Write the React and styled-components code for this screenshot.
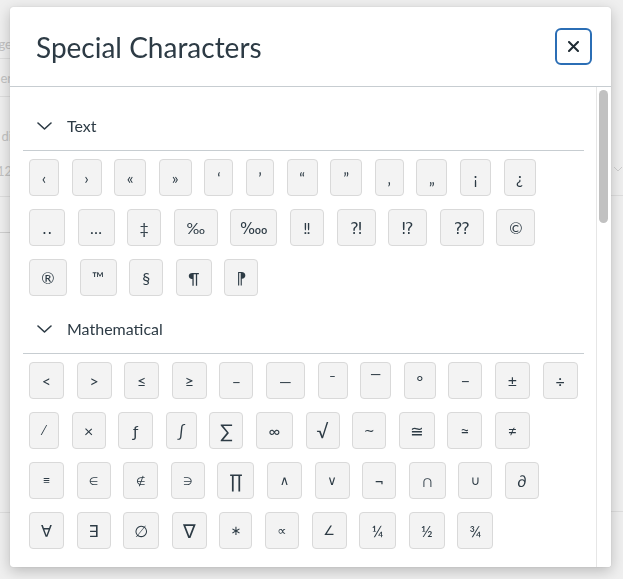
import React from "react";
import styled, { createGlobalStyle } from "styled-components";

const GlobalStyle = createGlobalStyle`
  html, body { margin: 0; padding: 0; height: 100%; overflow: hidden; }
  body {
    background: #efefef;
    font-family: Lato, "Noto Sans", "DejaVu Sans", sans-serif;
  }
  #root { height: 100%; }
`;

/* ---------- faded page behind the dialog ---------- */
const Page = styled.div`
  height: 100%;
  display: flex;
  justify-content: space-between;
`;

const SideCol = styled.div`
  width: 12px;
  display: flex;
  flex-direction: column;
  overflow: hidden;
`;

const SideCell = styled.div`
  box-sizing: border-box;
  height: ${(p) => p.$h}px;
  flex: ${(p) => (p.$fill ? "1" : "none")};
  border-bottom: 1px solid ${(p) => (p.$strong ? "#cfcfcf" : p.$line ? "#dedede" : "transparent")};
  display: flex;
  flex-direction: column;
  justify-content: ${(p) => p.$justify || "center"};
  align-items: ${(p) => (p.$start ? "flex-start" : "flex-end")};
  gap: ${(p) => p.$gap || 0}px;
  padding: ${(p) => p.$pad || "0"};
`;

const FadedText = styled.span`
  font-size: 13px;
  line-height: 16px;
  color: #c3c3c3;
  white-space: nowrap;
`;

/* ---------- dialog ---------- */
const Overlay = styled.div`
  position: fixed;
  inset: 0;
  display: flex;
  box-sizing: border-box;
  padding: 7px 12px 12px 10px;
`;

const Modal = styled.section`
  flex: 1;
  min-height: 0;
  display: flex;
  flex-direction: column;
  background: #ffffff;
  border-radius: 3px;
  box-shadow: 0 4px 14px rgba(0, 0, 0, 0.22), 0 0 1px rgba(0, 0, 0, 0.25);
  overflow: hidden;
`;

const Header = styled.header`
  flex: none;
  height: 80px;
  box-sizing: border-box;
  display: flex;
  align-items: center;
  justify-content: space-between;
  padding: 0 19px 0 26px;
  border-bottom: 1px solid #c7cdd1;
`;

const Title = styled.h2`
  margin: 0;
  font-size: 28px;
  font-weight: 400;
  line-height: 1;
  color: #2d3b45;
`;

const CloseButton = styled.button`
  width: 37px;
  height: 37px;
  box-sizing: border-box;
  padding: 0;
  border: 2px solid #2b6eb5;
  border-radius: 6px;
  background: #ffffff;
  display: grid;
  place-items: center;
  cursor: pointer;
`;

const BodyFrame = styled.div`
  flex: 1;
  min-height: 0;
  display: flex;
`;

const Content = styled.div`
  flex: 1;
  min-width: 0;
  overflow: hidden;
  padding: 14px 12px 0 13px;
`;

const ScrollTrack = styled.div`
  flex: none;
  width: 15px;
  box-sizing: border-box;
  border-left: 1px solid #e6e6e6;
  padding: 3px 3px 0 2px;
  background: #ffffff;
`;

const ScrollThumb = styled.div`
  height: 133px;
  border-radius: 5px;
  background: #c1c1c1;
`;

const Section = styled.div`
  padding-bottom: 8px;
`;

const SectionToggle = styled.button`
  width: 100%;
  height: 50px;
  box-sizing: border-box;
  display: flex;
  align-items: center;
  gap: 15px;
  padding: 0 0 0 14px;
  margin: 0;
  border: 0;
  border-bottom: 1px solid #c7cdd1;
  background: none;
  font-family: inherit;
  font-size: 16px;
  color: #2d3b45;
  cursor: pointer;
`;

const Rows = styled.div`
  display: flex;
  flex-direction: column;
  gap: 13px;
  margin-top: 8px;
  padding-left: 6px;
`;

const Row = styled.div`
  display: flex;
  gap: 12.6px;
`;

const CharButton = styled.button`
  width: ${(p) => p.$w}px;
  height: 37px;
  flex: none;
  box-sizing: border-box;
  padding: 0;
  border: 1px solid #d9d9d9;
  border-radius: 4px;
  background: #f3f3f3;
  display: flex;
  align-items: center;
  justify-content: center;
  font-family: Lato, "DejaVu Sans", "Noto Sans", sans-serif;
  font-size: ${(p) => p.$size}px;
  line-height: 1;
  color: #2d3b45;
  cursor: pointer;
`;

const Chevron = () => (
  <svg width="15" height="8" viewBox="0 0 15 8" aria-hidden="true">
    <polyline points="1,1 7.5,7 14,1" fill="none" stroke="#2d3b45" strokeWidth="1.6" strokeLinecap="round" strokeLinejoin="round" />
  </svg>
);

const SmallChevron = () => (
  <svg width="10" height="6" viewBox="0 0 10 6" aria-hidden="true">
    <polyline points="1,1 5,5 9,1" fill="none" stroke="#cfcfcf" strokeWidth="1" />
  </svg>
);

const CloseIcon = () => (
  <svg width="11" height="11" viewBox="0 0 11 11" aria-hidden="true">
    <path d="M1 1 L10 10 M10 1 L1 10" stroke="#1f2b33" strokeWidth="2" strokeLinecap="round" />
  </svg>
);

/* glyphs that the reference draws in a smaller or larger fallback face */
const TINY = "∈∋∉";
const SMALL = "∧∨∪≡∼∗∝∠⁄";
const LARGE = "∏∑√∇";
const sizeOf = (c) =>
  TINY.includes(c) ? 11 : SMALL.includes(c) ? 13 : LARGE.includes(c) ? 19 : 16;

const r = (s, widths) => [...s].map((c, i) => ({ c, w: widths[i], size: sizeOf(c) }));

const sections = [
  {
    name: "Text",
    rows: [
      r("‹›«»‘’“”‚„¡¿", [30, 30, 32, 33, 29, 28, 31, 32, 29, 31, 31, 32]),
      r("‥…‡‰‱‼⁈⁉⁇©", [36, 37, 34, 44, 47, 34, 39, 39, 44, 39]),
      r("®™§¶⁋", [38, 37, 34, 36, 34]),
    ],
  },
  {
    name: "Mathematical",
    rows: [
      r("<>≤≥–—¯‾°−±÷", [35, 35, 35, 35, 34, 39, 30, 31, 32, 34, 35, 35]),
      r("⁄×ƒ∫∑∞√∼≅≈≠", [30, 34, 35, 31, 34, 37, 34, 34, 36, 35, 35]),
      r("≡∈∉∋∏∧∨¬∩∪∂", [35, 34, 35, 34, 37, 35, 35, 34, 37, 34, 34]),
      r("∀∃∅∇∗∝∠¼½¾", [35, 34, 36, 35, 33, 34, 35, 37, 36, 36]),
    ],
  },
];

export default function App() {
  return (
    <>
      <GlobalStyle />
      <Page>
        <SideCol>
          <SideCell $h={59} $line $justify="flex-end" $pad="0 0 6px 0">
            <FadedText>ge</FadedText>
          </SideCell>
          <SideCell $h={38} $line>
            <FadedText>er</FadedText>
          </SideCell>
          <SideCell $h={100} $line $justify="flex-start" $gap={19} $pad="31px 0 0 0">
            <FadedText>di</FadedText>
            <FadedText>12</FadedText>
          </SideCell>
          <SideCell $h={36} $strong />
          <SideCell $h={280} $line />
          <SideCell $fill />
        </SideCol>
        <SideCol>
          <SideCell $h={196} $line $justify="flex-start" $start $pad="166px 0 0 2px">
            <SmallChevron />
          </SideCell>
          <SideCell $h={316} $line />
          <SideCell $fill />
        </SideCol>
      </Page>

      <Overlay>
        <Modal role="dialog" aria-label="Special Characters">
          <Header>
            <Title>Special Characters</Title>
            <CloseButton aria-label="Close">
              <CloseIcon />
            </CloseButton>
          </Header>
          <BodyFrame>
            <Content>
              {sections.map((s) => (
                <Section key={s.name}>
                  <SectionToggle>
                    <Chevron />
                    <span>{s.name}</span>
                  </SectionToggle>
                  <Rows>
                    {s.rows.map((row, i) => (
                      <Row key={i}>
                        {row.map((ch, j) => (
                          <CharButton key={j} $w={ch.w} $size={ch.size} title={ch.c}>
                            {ch.c}
                          </CharButton>
                        ))}
                      </Row>
                    ))}
                  </Rows>
                </Section>
              ))}
            </Content>
            <ScrollTrack aria-hidden="true">
              <ScrollThumb />
            </ScrollTrack>
          </BodyFrame>
        </Modal>
      </Overlay>
    </>
  );
}
